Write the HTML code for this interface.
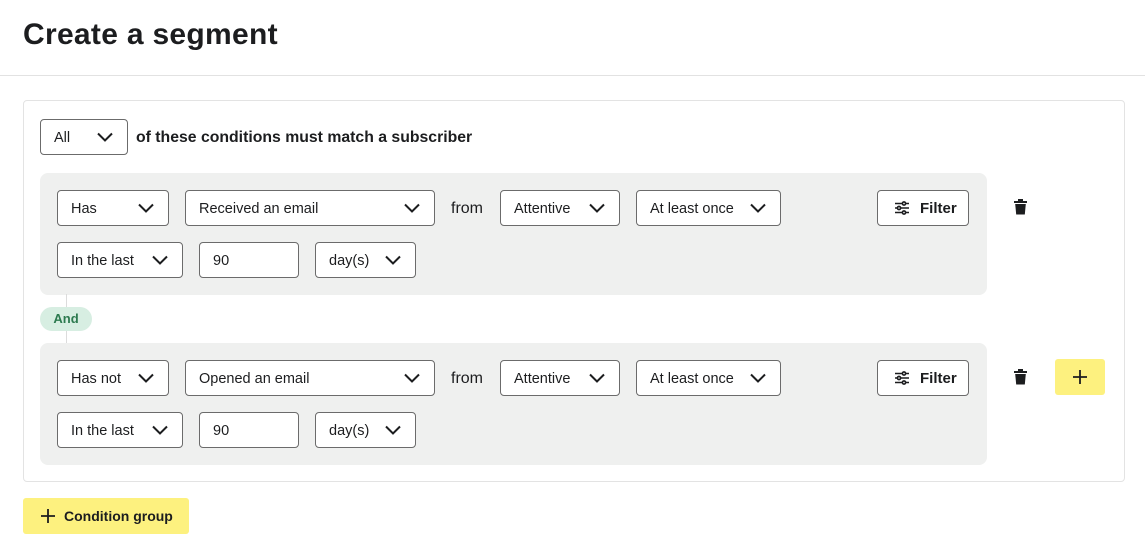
<!DOCTYPE html>
<html><head><meta charset="utf-8"><style>
*{box-sizing:border-box;margin:0;padding:0}
body{width:1145px;height:551px;background:#fff;font-family:"Liberation Sans",sans-serif;color:#1c1d1f;position:relative;overflow:hidden}
.a{position:absolute}
h1{position:absolute;left:23px;top:18px;font-size:30px;font-weight:700;letter-spacing:0.3px}
.hr{left:0;top:75px;width:1145px;height:1px;background:#e2e2e2}
.panel{left:23px;top:100px;width:1102px;height:382px;border:1px solid #e3e3e3;border-radius:4px}
.grp{background:#eff0ef;border-radius:8px;width:947px;height:122px;left:40px}
.sel{position:absolute;height:36px;border:1px solid #6b6b6b;border-radius:4px;background:#fff;font-size:14.5px;line-height:36px;padding-left:13px}
.sel svg{position:absolute;right:14px;top:12px}
.lbl{position:absolute;font-size:16px;line-height:38px}
.filter{position:absolute;height:36px;width:92px;border:1px solid #6b6b6b;border-radius:4px;background:#fff;font-size:15px;font-weight:700;line-height:36px;padding-left:42px}
.filter svg{position:absolute;left:17px;top:10px}
.trash{position:absolute}
</style></head><body>
<h1>Create a segment</h1>
<div class="a hr"></div>
<div class="a panel"></div>

<div class="sel" style="left:40px;top:119px;width:88px">All<svg width="16" height="10" viewBox="0 0 16 10"><path d="M1 1.5l7 7 7-7" fill="none" stroke="#1c1d1f" stroke-width="2"/></svg></div>
<div class="lbl" style="left:136px;top:119px;font-weight:700;font-size:15.8px">of these conditions must match a subscriber</div>

<div class="a grp" style="top:173px"></div>
<div class="a" style="left:66px;top:294px;width:1px;height:50px;background:#dcdcdc"></div>
<div class="a" style="left:40px;top:307px;width:52px;height:24px;border-radius:12px;background:#d7eee2;color:#2c7a4f;font-size:13px;font-weight:700;text-align:center;line-height:24px">And</div>
<div class="a grp" style="top:343px"></div>

<!-- group 1 -->
<div class="sel" style="left:57px;top:190px;width:112px">Has<svg width="16" height="10" viewBox="0 0 16 10"><path d="M1 1.5l7 7 7-7" fill="none" stroke="#1c1d1f" stroke-width="2"/></svg></div>
<div class="sel" style="left:185px;top:190px;width:250px">Received an email<svg width="16" height="10" viewBox="0 0 16 10"><path d="M1 1.5l7 7 7-7" fill="none" stroke="#1c1d1f" stroke-width="2"/></svg></div>
<div class="lbl" style="left:451px;top:190px">from</div>
<div class="sel" style="left:500px;top:190px;width:120px">Attentive<svg width="16" height="10" viewBox="0 0 16 10"><path d="M1 1.5l7 7 7-7" fill="none" stroke="#1c1d1f" stroke-width="2"/></svg></div>
<div class="sel" style="left:636px;top:190px;width:145px">At least once<svg width="16" height="10" viewBox="0 0 16 10"><path d="M1 1.5l7 7 7-7" fill="none" stroke="#1c1d1f" stroke-width="2"/></svg></div>
<div class="filter" style="left:877px;top:190px"><svg width="14" height="14" viewBox="0 0 14 14" fill="none" stroke="#1c1d1f" stroke-width="1.6"><path d="M0 2.5h14M0 7h14M0 11.5h14"/><circle cx="9" cy="2.5" r="1.6" fill="#fff"/><circle cx="4" cy="7" r="1.6" fill="#fff"/><circle cx="9" cy="11.5" r="1.6" fill="#fff"/></svg>Filter</div>
<svg class="trash" style="left:1014px;top:199px" width="13" height="16" viewBox="0 0 13 16"><rect x="0" y="2" width="13" height="2" fill="#1c1d1f"/><rect x="4" y="0" width="5" height="2" fill="#1c1d1f"/><path d="M1.2 5h10.6l-1 10.5H2.2z" fill="#1c1d1f"/></svg>

<div class="sel" style="left:57px;top:242px;width:126px">In the last<svg width="16" height="10" viewBox="0 0 16 10"><path d="M1 1.5l7 7 7-7" fill="none" stroke="#1c1d1f" stroke-width="2"/></svg></div>
<div class="sel" style="left:199px;top:242px;width:100px">90</div>
<div class="sel" style="left:315px;top:242px;width:101px">day(s)<svg width="16" height="10" viewBox="0 0 16 10"><path d="M1 1.5l7 7 7-7" fill="none" stroke="#1c1d1f" stroke-width="2"/></svg></div>

<!-- group 2 -->
<div class="sel" style="left:57px;top:360px;width:112px">Has not<svg width="16" height="10" viewBox="0 0 16 10"><path d="M1 1.5l7 7 7-7" fill="none" stroke="#1c1d1f" stroke-width="2"/></svg></div>
<div class="sel" style="left:185px;top:360px;width:250px">Opened an email<svg width="16" height="10" viewBox="0 0 16 10"><path d="M1 1.5l7 7 7-7" fill="none" stroke="#1c1d1f" stroke-width="2"/></svg></div>
<div class="lbl" style="left:451px;top:360px">from</div>
<div class="sel" style="left:500px;top:360px;width:120px">Attentive<svg width="16" height="10" viewBox="0 0 16 10"><path d="M1 1.5l7 7 7-7" fill="none" stroke="#1c1d1f" stroke-width="2"/></svg></div>
<div class="sel" style="left:636px;top:360px;width:145px">At least once<svg width="16" height="10" viewBox="0 0 16 10"><path d="M1 1.5l7 7 7-7" fill="none" stroke="#1c1d1f" stroke-width="2"/></svg></div>
<div class="filter" style="left:877px;top:360px"><svg width="14" height="14" viewBox="0 0 14 14" fill="none" stroke="#1c1d1f" stroke-width="1.6"><path d="M0 2.5h14M0 7h14M0 11.5h14"/><circle cx="9" cy="2.5" r="1.6" fill="#fff"/><circle cx="4" cy="7" r="1.6" fill="#fff"/><circle cx="9" cy="11.5" r="1.6" fill="#fff"/></svg>Filter</div>
<svg class="trash" style="left:1014px;top:369px" width="13" height="16" viewBox="0 0 13 16"><rect x="0" y="2" width="13" height="2" fill="#1c1d1f"/><rect x="4" y="0" width="5" height="2" fill="#1c1d1f"/><path d="M1.2 5h10.6l-1 10.5H2.2z" fill="#1c1d1f"/></svg>
<div class="a" style="left:1055px;top:359px;width:50px;height:36px;background:#fdf17f;border-radius:3px"><svg style="position:absolute;left:18px;top:11px" width="14" height="14" viewBox="0 0 14 14"><path d="M7 0v14M0 7h14" stroke="#1c1d1f" stroke-width="1.8"/></svg></div>

<div class="sel" style="left:57px;top:412px;width:126px">In the last<svg width="16" height="10" viewBox="0 0 16 10"><path d="M1 1.5l7 7 7-7" fill="none" stroke="#1c1d1f" stroke-width="2"/></svg></div>
<div class="sel" style="left:199px;top:412px;width:100px">90</div>
<div class="sel" style="left:315px;top:412px;width:101px">day(s)<svg width="16" height="10" viewBox="0 0 16 10"><path d="M1 1.5l7 7 7-7" fill="none" stroke="#1c1d1f" stroke-width="2"/></svg></div>

<div class="a" style="left:23px;top:498px;width:166px;height:36px;background:#fdf17f;border-radius:3px;font-size:14px;font-weight:700;line-height:36px;padding-left:41px">Condition group<svg style="position:absolute;left:18px;top:11px" width="14" height="14" viewBox="0 0 14 14"><path d="M7 0v14M0 7h14" stroke="#1c1d1f" stroke-width="1.8"/></svg></div>
</body></html>
